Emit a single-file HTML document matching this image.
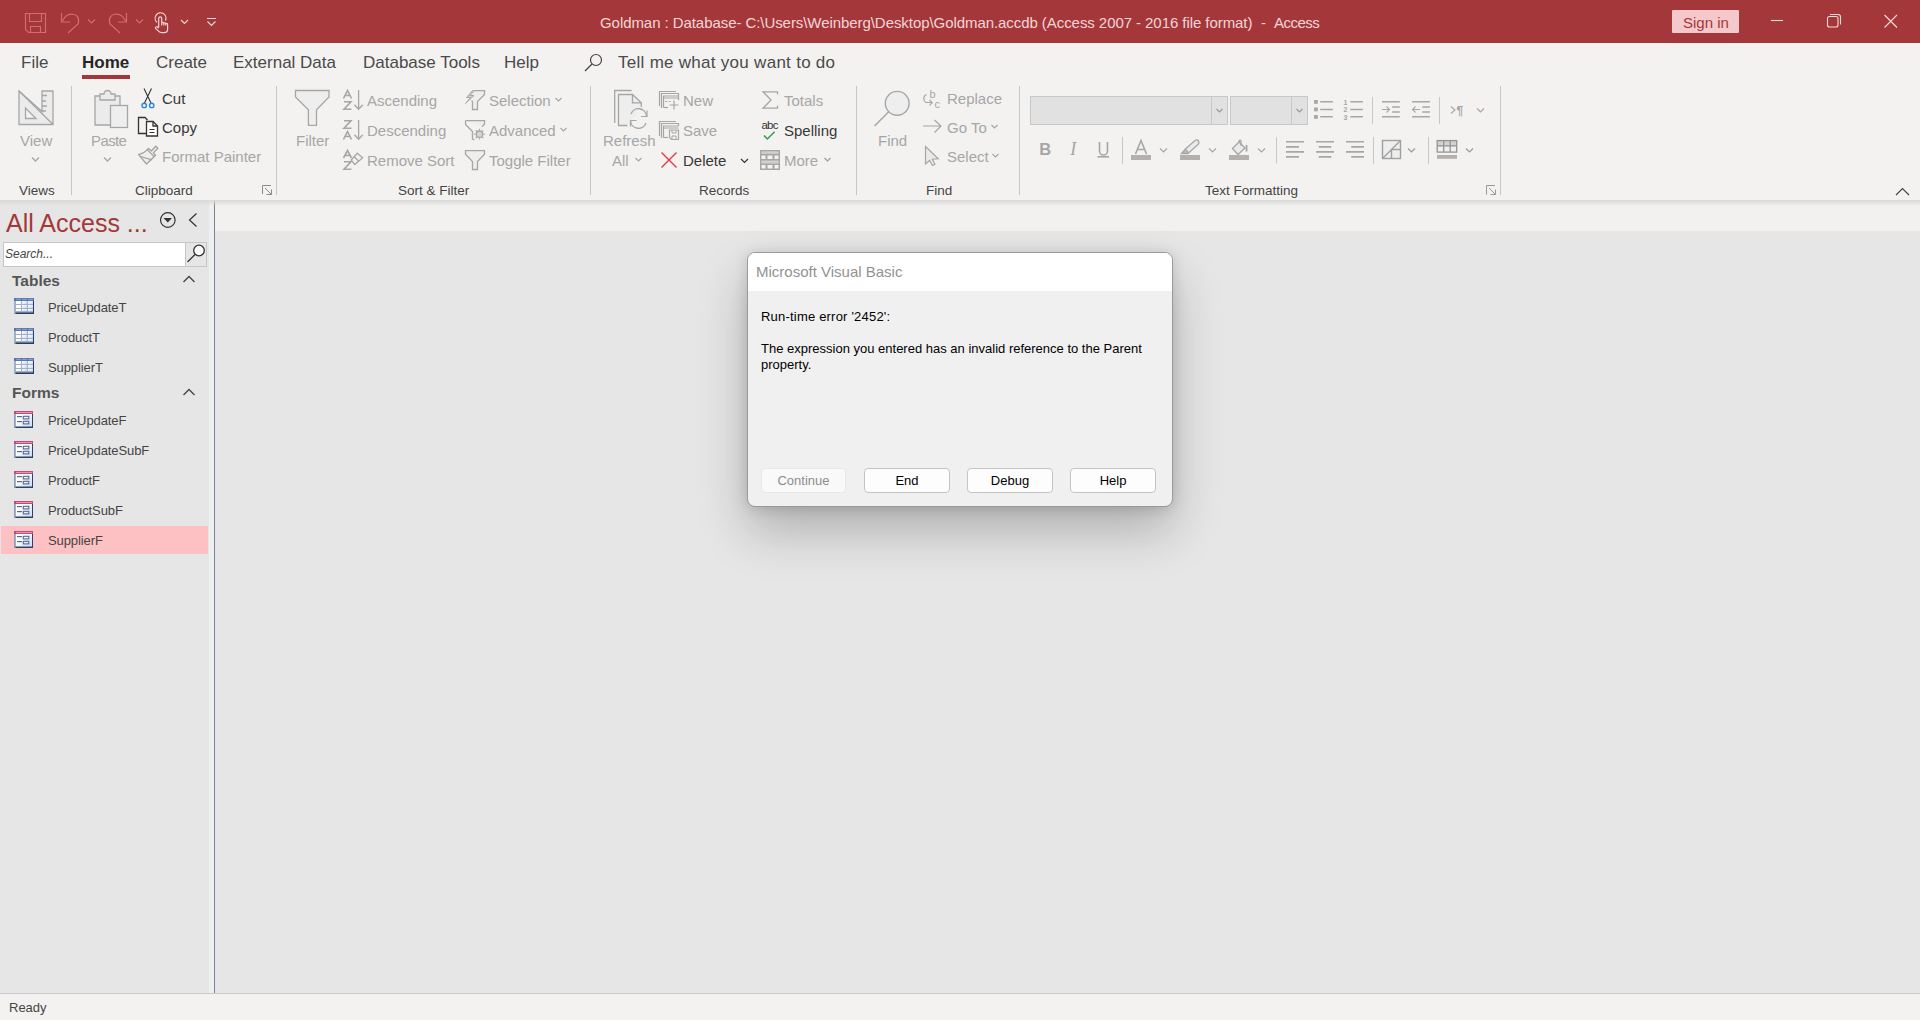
<!DOCTYPE html>
<html><head><meta charset="utf-8">
<style>
*{margin:0;padding:0;box-sizing:border-box}
html,body{width:1920px;height:1020px;overflow:hidden;background:#e6e6e6;font-family:"Liberation Sans",sans-serif;position:relative}
.a{position:absolute}
.t{position:absolute;white-space:nowrap;line-height:1}
#title{left:0;top:0;width:1920px;height:43px;background:#a4373a}
#tabs{left:0;top:43px;width:1920px;height:37px;background:#f3f2f1}
#ribbon{left:0;top:80px;width:1920px;height:120px;background:#f3f2f1}
#shadow{left:0;top:200px;width:1920px;height:6px;background:linear-gradient(#d8d8d8,rgba(230,230,230,0))}
#nav{left:0;top:200px;width:209px;height:793px;background:#e6e6e6}
#navstrip{left:209px;top:200px;width:5px;height:793px;background:#eeeff1}
#navline{left:214px;top:200px;width:1px;height:793px;background:#7a828d}
#docstrip{left:215px;top:200px;width:1705px;height:31px;background:#f2f1f0}
#status{left:0;top:993px;width:1920px;height:27px;background:#f3f2f1;border-top:1px solid #c8c8c8}
.tab{font-size:17px;color:#4a4a4a}
.dis{color:#a6a6a6}
.en{color:#383838}
.rl{font-size:15px}
.gl{font-size:13.5px;color:#444}
.sep{position:absolute;width:1px;background:#c8c6c4}
svg{position:absolute;overflow:visible}
</style></head><body>
<div id="title" class="a"></div>
<div id="tabs" class="a"></div>
<div id="ribbon" class="a"></div>
<div id="nav" class="a"></div>
<div id="navstrip" class="a"></div>
<div id="navline" class="a"></div>
<div id="docstrip" class="a"></div>
<div id="shadow" class="a"></div>
<div id="status" class="a"></div>

<!-- title text -->
<div class="t" style="left:600px;top:15px;font-size:15px;color:#f4d6d7;letter-spacing:-0.065px">Goldman : Database- C:\Users\Weinberg\Desktop\Goldman.accdb (Access 2007 - 2016 file format)</div><div class="t" style="left:1261px;top:15px;font-size:15px;color:#f4d6d7">-</div><div class="t" style="left:1274px;top:15px;font-size:15px;color:#f4d6d7;letter-spacing:-0.5px">Access</div>
<div class="a" style="left:1672px;top:10px;width:67px;height:23px;background:#f5c9cb;border-radius:1px"></div>
<div class="t" style="left:1683px;top:15px;font-size:15px;color:#a4373a">Sign in</div>

<!-- tabs -->
<div class="t tab" style="left:21px;top:54px">File</div>
<div class="t tab" style="left:82px;top:54px;color:#262626;font-weight:bold">Home</div>
<div class="a" style="left:82px;top:75px;width:48px;height:4px;background:#a4373a"></div>
<div class="t tab" style="left:156px;top:54px">Create</div>
<div class="t tab" style="left:233px;top:54px">External Data</div>
<div class="t tab" style="left:363px;top:54px">Database Tools</div>
<div class="t tab" style="left:504px;top:54px">Help</div>
<div class="t tab" style="left:618px;top:54px;letter-spacing:0.28px">Tell me what you want to do</div>

<!-- ribbon separators -->
<div class="sep" style="left:71px;top:86px;height:109px"></div>
<div class="sep" style="left:276px;top:86px;height:109px"></div>
<div class="sep" style="left:590px;top:86px;height:109px"></div>
<div class="sep" style="left:856px;top:86px;height:109px"></div>
<div class="sep" style="left:1019px;top:86px;height:109px"></div>
<div class="sep" style="left:1500px;top:86px;height:109px"></div>

<!-- group labels -->
<div class="t gl" style="left:19px;top:184px">Views</div>
<div class="t gl" style="left:135px;top:184px">Clipboard</div>
<div class="t gl" style="left:398px;top:184px">Sort &amp; Filter</div>
<div class="t gl" style="left:699px;top:184px">Records</div>
<div class="t gl" style="left:926px;top:184px">Find</div>
<div class="t gl" style="left:1205px;top:184px">Text Formatting</div>

<!-- ribbon text -->
<div class="t rl dis" style="left:20px;top:133px">View</div>
<div class="t rl dis" style="left:91px;top:133px;letter-spacing:-0.6px">Paste</div>
<div class="t rl en" style="left:162px;top:91px">Cut</div>
<div class="t rl en" style="left:162px;top:120px">Copy</div>
<div class="t rl dis" style="left:162px;top:149px">Format Painter</div>
<div class="t rl dis" style="left:296px;top:133px">Filter</div>
<div class="t rl dis" style="left:367px;top:93px">Ascending</div>
<div class="t rl dis" style="left:367px;top:123px">Descending</div>
<div class="t rl dis" style="left:367px;top:153px">Remove Sort</div>
<div class="t rl dis" style="left:489px;top:93px">Selection</div>
<div class="t rl dis" style="left:489px;top:123px">Advanced</div>
<div class="t rl dis" style="left:489px;top:153px">Toggle Filter</div>
<div class="t rl dis" style="left:603px;top:133px">Refresh</div>
<div class="t rl dis" style="left:612px;top:153px">All</div>
<div class="t rl dis" style="left:683px;top:93px">New</div>
<div class="t rl dis" style="left:683px;top:123px">Save</div>
<div class="t rl en" style="left:683px;top:153px">Delete</div>
<div class="t rl dis" style="left:784px;top:93px">Totals</div>
<div class="t rl en" style="left:784px;top:123px">Spelling</div>
<div class="t rl dis" style="left:784px;top:153px">More</div>
<div class="t rl dis" style="left:878px;top:133px">Find</div>
<div class="t rl dis" style="left:947px;top:91px">Replace</div>
<div class="t rl dis" style="left:947px;top:120px">Go To</div>
<div class="t rl dis" style="left:947px;top:149px">Select</div>

<!-- combos -->
<div class="a" style="left:1030px;top:96px;width:198px;height:29px;background:#e1e1e1;border:1px solid #c8c8c8"></div>
<div class="a" style="left:1211px;top:97px;width:1px;height:27px;background:#c8c8c8"></div>
<div class="a" style="left:1230px;top:96px;width:78px;height:29px;background:#e1e1e1;border:1px solid #c8c8c8"></div>
<div class="a" style="left:1291px;top:97px;width:1px;height:27px;background:#c8c8c8"></div>

<!-- nav pane -->
<div class="t" style="left:6px;top:211px;font-size:25px;color:#a4373a">All Access ...</div>
<div class="a" style="left:3px;top:242px;width:204px;height:25px;background:#fff;border:1px solid #c6c6c6"></div>
<div class="a" style="left:185px;top:242px;width:22px;height:25px;background:#e6e6e6;border:1px solid #c6c6c6"></div>
<div class="t" style="left:5px;top:248px;font-size:12px;font-style:italic;color:#444">Search...</div>
<div class="t" style="left:12px;top:273px;font-size:15.5px;font-weight:bold;color:#555">Tables</div>
<div class="t" style="left:12px;top:385px;font-size:15.5px;font-weight:bold;color:#555">Forms</div>
<div class="a" style="left:1px;top:526px;width:207px;height:28px;background:#fdc1c4"></div>
<div class="t" style="left:48px;top:301px;font-size:13px;color:#444;letter-spacing:-0.1px">PriceUpdateT</div>
<div class="t" style="left:48px;top:331px;font-size:13px;color:#444;letter-spacing:-0.1px">ProductT</div>
<div class="t" style="left:48px;top:361px;font-size:13px;color:#444;letter-spacing:-0.1px">SupplierT</div>
<div class="t" style="left:48px;top:414px;font-size:13px;color:#444;letter-spacing:-0.1px">PriceUpdateF</div>
<div class="t" style="left:48px;top:444px;font-size:13px;color:#444;letter-spacing:-0.1px">PriceUpdateSubF</div>
<div class="t" style="left:48px;top:474px;font-size:13px;color:#444;letter-spacing:-0.1px">ProductF</div>
<div class="t" style="left:48px;top:504px;font-size:13px;color:#444;letter-spacing:-0.1px">ProductSubF</div>
<div class="t" style="left:48px;top:534px;font-size:13px;color:#444;letter-spacing:-0.1px">SupplierF</div>

<!-- status -->
<div class="t" style="left:9px;top:1001px;font-size:13px;color:#444">Ready</div>

<!-- dialog -->
<div class="a" style="left:747px;top:252px;width:426px;height:255px;border:1px solid #9a9a9a;border-radius:8px;background:#f0f0f0;overflow:hidden;box-shadow:0 24px 50px rgba(0,0,0,0.24), 0 2px 14px rgba(0,0,0,0.14)">
  <div class="a" style="left:0;top:0;width:424px;height:38px;background:#fff"></div>
</div>
<div class="t" style="left:756px;top:264px;font-size:15px;color:#929292">Microsoft Visual Basic</div>
<div class="t" style="left:761px;top:310px;font-size:13px;color:#000;letter-spacing:0.2px">Run-time error '2452':</div>
<div class="t" style="left:761px;top:342px;font-size:13px;color:#000">The expression you entered has an invalid reference to the Parent</div>
<div class="t" style="left:761px;top:358px;font-size:13px;color:#000">property.</div>
<div class="a" style="left:761px;top:468px;width:85px;height:25px;background:#f9f9f9;border:1px solid #e8e8e8;border-radius:4px"></div>
<div class="a" style="left:864px;top:468px;width:86px;height:25px;background:#fdfdfd;border:1px solid #c4c4c4;border-radius:4px"></div>
<div class="a" style="left:967px;top:468px;width:86px;height:25px;background:#fdfdfd;border:1px solid #c4c4c4;border-radius:4px"></div>
<div class="a" style="left:1070px;top:468px;width:86px;height:25px;background:#fdfdfd;border:1px solid #c4c4c4;border-radius:4px"></div>
<div class="t" style="left:761px;top:474px;width:85px;text-align:center;font-size:13px;color:#8d8d8d">Continue</div>
<div class="t" style="left:864px;top:474px;width:86px;text-align:center;font-size:13px;color:#000">End</div>
<div class="t" style="left:967px;top:474px;width:86px;text-align:center;font-size:13px;color:#000">Debug</div>
<div class="t" style="left:1070px;top:474px;width:86px;text-align:center;font-size:13px;color:#000">Help</div>


<svg width="1920" height="1020" style="left:0;top:0" fill="none" stroke-linecap="butt" stroke-linejoin="miter">
<!-- QAT -->
<g stroke="#d56b6f" stroke-width="1.2">
  <path d="M25.5,13.5 H45.5 V32.5 H28.5 L25.5,29.5 Z"/>
  <path d="M29.5,13.5 V21.5 H41.5 V13.5"/>
  <path d="M30.5,32.5 V26.5 H40.5 V32.5"/>
  <path d="M61.5,13 V22 H70"/>
  <path d="M62.5,21 C66,11 82,12 78,24 L68,33"/>
  <path d="M88,19.5 L91.5,23 L95,19.5"/>
  <path d="M126.5,13 V22 H118"/>
  <path d="M125.5,21 C122,11 106,12 110,24 L120,33"/>
  <path d="M136,19.5 L139.5,23 L143,19.5"/>
</g>
<g stroke="#f3d4d5" stroke-width="1.2">
  <path d="M157,22.3 A5.4,5.4 0 1 1 165.4,20.6"/>
  <path d="M158.7,27.2 V18.3 A1.5,1.5 0 0 1 161.7,18.3 V25.6 M161.7,23.2 Q161.9,22.4 162.8,22.4 Q163.8,22.4 163.8,23.4 V25.6 M163.8,23.4 Q164,22.8 164.8,22.8 Q165.8,22.8 165.8,23.8 V25.6 M165.8,24 Q166,23.3 166.7,23.3 Q167.6,23.3 167.6,24.4 V29.6 C167.6,31.6 166.2,32.6 164.3,32.6 H161.8 C160.4,32.6 159.4,32.1 158.5,31.2 L155.6,28.3 C155,27.6 156,26.4 157.2,26.9 L158.7,27.9"/>
  <path d="M181,20 L184.5,23.5 L188,20"/>
  <path d="M207,18.5 H216 M207.5,21.5 L211.5,25.5 L215.5,21.5"/>
</g>
<g stroke="#f6dadb" stroke-width="1.1">
  <path d="M1771,20.5 H1783"/>
  <path d="M1829.5,16.5 H1836 Q1838,16.5 1838,18.5 V25 Q1838,27 1836,27 H1829.5 Q1827.5,27 1827.5,25 V18.5 Q1827.5,16.5 1829.5,16.5 Z"/>
  <path d="M1830,14.5 H1838 Q1840.5,14.5 1840.5,17 V24.5"/>
  <path d="M1884.5,15 L1897,27.5 M1897,15 L1884.5,27.5"/>
</g>
<!-- tell me search -->
<g stroke="#444" stroke-width="1.2">
  <circle cx="596" cy="60" r="5.5"/>
  <path d="M592,64 L585,71"/>
</g>
<!-- View icon -->
<g stroke="#a6a6a6" stroke-width="1.3">
  <path d="M19,91 V124.5 H53 V91 H42 V111.5 Z" fill="#ebebeb"/>
  <path d="M19,91 L53,124.5" />
  <path d="M25.5,108 V118.5 H36 Z" fill="#f3f2f1"/>
  <path d="M42,95.5 H47 M42,101 H46 M42,106 H47 M42,111 H46"/>
  <path d="M32,157.5 L35.5,161 L39,157.5"/>
</g>
<!-- Paste -->
<g stroke="#a6a6a6" stroke-width="1.3">
  <path d="M110,125 H95 V96 H120 V105" fill="#ebebeb"/>
  <path d="M100,100 V94 H104 A3.5,3.5 0 0 1 111,94 H115 V100 Z" fill="#ebebeb"/>
  <rect x="110.5" y="105.5" width="17" height="22" fill="#eeeeee"/>
  <path d="M104,157.5 L107.5,161 L111,157.5"/>
</g>
<!-- Cut -->
<g stroke="#333" stroke-width="1.1">
  <path d="M144,88.5 L151,103 M151.5,88.5 L144.5,103"/>
</g>
<g stroke="#2b88d8" stroke-width="1.4">
  <circle cx="144.2" cy="105.4" r="2.2"/>
  <circle cx="151.7" cy="105.4" r="2.2"/>
</g>
<!-- Copy -->
<g stroke="#333" stroke-width="1.3">
  <path d="M146,133.5 H138.5 V117.5 H145 L147.5,120"/>
  <path d="M146.5,121.5 H153 L157.5,126 V136 H146.5 Z" fill="#fff"/>
  <path d="M153,121.5 V126 H157.5"/>
  <path d="M149.5,129.5 H154.5 M149.5,132.5 H154.5" stroke-width="1"/>
</g>
<!-- Format painter -->
<g stroke="#a2a2a2" stroke-width="1.3" stroke-linejoin="round">
  <path d="M138.6,154.6 C142,153.6 145.3,152 147.2,149.6 L148.5,148.4 L151.3,151 L155.7,146.3 L157.8,148.3 L153.3,152.9 L155.6,155.3 L146.5,164 Z" fill="#eeeeee"/>
  <path d="M147.2,149.6 L154.2,156.6"/>
  <path d="M140.5,156.5 L152,159.8"/>
</g>
<!-- dialog launcher clipboard -->
<g stroke="#8a8a8a" stroke-width="1">
  <path d="M262.5,194 V185.5 H271"/>
  <path d="M265,188 L271.5,194.5 M266.5,194.5 H271.5 V189.5"/>
</g>
<!-- Filter -->
<g stroke="#a6a6a6" stroke-width="1.3">
  <path d="M295.5,90.5 H329 V97 L316.5,109.8 V125.3 H308.4 V109.8 L295.5,97 Z" fill="#eeeeee"/>
</g>
<!-- Sort icons -->
<g stroke="#a6a6a6" stroke-width="1.3">
  <path d="M343.5,98.5 L347.5,90.5 L351.5,98.5 M345,95.5 H350" stroke-width="1.6"/>
  <path d="M344,101.8 H351 L344,109.3 H351.5" stroke-width="1.6"/>
  <path d="M358.6,90 V109.5 M354.4,104.7 L358.6,109.3 L362.8,104.7"/>
  <path d="M344,120.8 H351 L344,128.3 H351.5" stroke-width="1.6"/>
  <path d="M343.5,139.5 L347.5,131.5 L351.5,139.5 M345,136.5 H350" stroke-width="1.6"/>
  <path d="M358.6,120 V139.5 M354.4,134.7 L358.6,139.3 L362.8,134.7"/>
  <path d="M343.5,158 L347.5,150.5 L351.5,158 M345,155.5 H350" stroke-width="1.6"/>
  <path d="M344,161.8 H351 L344,169.3 H351.5" stroke-width="1.6"/>
  <path d="M357.2,153.2 L362.6,157.8 L354.8,164.6 L351.2,160 Z"/>
  <path d="M354,156.5 L358.5,161" />
</g>
<!-- Selection / Advanced / Toggle -->
<g stroke="#a6a6a6" stroke-width="1.3">
  <path d="M473.5,90.7 H484.5 V94.5 L477.5,101.5 V109.5 H472.5 V101.5 L471.5,100.5" fill="#eeeeee"/>
  <path d="M473,90 L466.5,97.5 H470.5 L465.5,103.5 L474,95.5 H470 L474.5,90.5" stroke-width="1" fill="#d0d0d0"/>
  <path d="M465.5,120.7 H484.5 V124.2 L482,126.7 M476,131.2 H477.5 M472.5,139.5 V131.5 L465.5,124.5 V120.7" fill="#eeeeee"/>
  <path d="M472.5,139.5 H474.5"/>
  <circle cx="479.5" cy="134.2" r="3.2" fill="#d6d6d6"/>
  <path d="M479.5,128.8 V130.2 M479.5,138.2 V139.6 M474.1,134.2 H475.5 M483.5,134.2 H484.9 M475.7,130.4 L476.7,131.4 M482.3,137 L483.3,138 M475.7,138 L476.7,137 M482.3,131.4 L483.3,130.4" stroke-width="1.2"/>
  <path d="M465.5,150.7 H484.5 V154.2 L477.5,161.5 V169.5 H472.5 V161.5 L465.5,154.2 Z" fill="#eeeeee"/>
  <path d="M555.5,98 L558.5,101 L561.5,98 M560.5,128 L563.5,131 L566.5,128" stroke-width="1.2"/>
</g>
<!-- Refresh -->
<g stroke="#a6a6a6" stroke-width="1.3">
  <path d="M614.7,123 V90.5 H631.6"/>
  <path d="M627.3,125.5 H618.5 V94.5 H632.5 L641.3,102.8 V107" fill="#eeeeee"/>
  <path d="M632.5,94.5 V102.8 H641.3"/>
  <path d="M631,114 A8,8 0 0 1 646.5,116 M646,123 A8,8 0 0 1 630.5,121"/>
  <path d="M647,110.5 V116.5 H641 M630.5,126.5 V120.5 H636.5" stroke-width="1.2"/>
  <path d="M635.5,158 L638.5,161 L641.5,158" stroke-width="1.2"/>
</g>
<!-- New / Save -->
<g stroke="#a6a6a6" stroke-width="1.2">
  <path d="M659.5,106 V91.5 H676"/>
  <path d="M661.5,108 V93.5 H678.5 V100"/>
  <path d="M663.5,107.5 V96 H678.5 M663.5,98 H678.5"/>
  <path d="M663.5,107.5 H668"/>
  <path d="M665,101.5 H667 M668.5,101.5 H670.5" />
  <path d="M674,100.5 V109.5 M669.5,105 H678.5"/>
  <path d="M659.5,136 V121.5 H676"/>
  <path d="M661.5,138 V123.5 H678.5 V126"/>
  <path d="M663.5,137.5 V126 H678.5 M663.5,128 H678.5"/>
  <path d="M663.5,137.5 H668"/>
  <path d="M669.5,130 H678.5 V139.5 H671.5 L669.5,137.5 Z"/>
  <path d="M672,130 V133 H676 V130 M672,139.5 V136 H676 V139.5" stroke-width="1"/>
</g>
<!-- Delete X -->
<g stroke="#e8383d" stroke-width="1.4">
  <path d="M661.5,152.5 L676.5,167.5 M676.5,152.5 L661.5,167.5"/>
</g>
<path d="M741,159 L744.5,162.5 L748,159" stroke="#333" stroke-width="1.2"/>
<!-- Totals -->
<g stroke="#a6a6a6" stroke-width="1.3">
  <path d="M777.5,94.5 V91.8 H763 L771,100 L763,108.2 H777.5 V105.5"/>
</g>
<!-- Spelling -->
<text x="761.5" y="128.5" font-family="Liberation Sans" font-size="11.5" fill="#333" stroke="none" letter-spacing="-0.8">abc</text>
<path d="M764,135.6 L767.3,139 L774.6,131.7" stroke="#2ea043" stroke-width="1.5"/>
<!-- More grid -->
<g stroke="none" fill="#a6a6a6">
  <path d="M760,150 H780 V170 H760 Z M761.5,155.5 V159 H765.5 V155.5 Z M767.5,155.5 V159 H772.5 V155.5 Z M774.5,155.5 V159 H778.5 V155.5 Z M761.5,165 V168.5 H765.5 V165 Z M767.5,165 V168.5 H772.5 V165 Z M774.5,165 V168.5 H778.5 V165 Z" fill-rule="evenodd"/>
  <rect x="761.3" y="151.3" width="17.4" height="2.5" fill="#d0d0d0"/>
  <rect x="761.3" y="160.5" width="17.4" height="3" fill="#d0d0d0"/>
</g>
<path d="M824.5,158 L827.5,161 L830.5,158" stroke="#9c9c9c" stroke-width="1.2"/>
<!-- Find -->
<g stroke="#a6a6a6" stroke-width="1.4">
  <circle cx="897.2" cy="103.3" r="11.9" fill="#eeeeee"/>
  <path d="M888.5,112 L874.5,126"/>
</g>
<!-- Replace / GoTo / Select -->
<text x="929.5" y="97.5" font-family="Liberation Sans" font-size="11" fill="#a6a6a6" stroke="none">b</text>
<text x="934.5" y="107.8" font-family="Liberation Sans" font-size="11" fill="#a6a6a6" stroke="none">c</text>
<g stroke="#a6a6a6" stroke-width="1.2">
  <path d="M926.5,94.5 C923,96 923,101 926,102.5 H931.5 M929.5,100 L932.2,102.7 L929.5,105.4"/>
  <path d="M923,126 H941 M934.5,120 L941,126 L934.5,132.5"/>
  <path d="M925.5,146.5 V164 L929.5,160.5 L932.5,165.5 L935,164.3 L932.3,159.2 L938.2,158.8 Z" fill="#eaeaea"/>
  <path d="M991.5,125 L994.5,128 L997.5,125 M992.5,154 L995.5,157 L998.5,154" stroke-width="1.2"/>
</g>
<!-- Combo chevrons -->
<path d="M1216.5,109 L1219.5,112 L1222.5,109 M1296.5,109 L1299.5,112 L1302.5,109" stroke="#999" stroke-width="1.2"/>
<!-- B I U -->
<text x="1039.3" y="155" font-family="Liberation Sans" font-size="16.5" font-weight="bold" fill="#a6a6a6" stroke="none">B</text>
<text x="1070.3" y="155" font-family="Liberation Serif" font-size="18" font-style="italic" fill="#a6a6a6" stroke="none">I</text>
<g stroke="#a6a6a6" stroke-width="1.3">
  <path d="M1099.5,142 V151 A4,4 0 0 0 1107.5,151 V142" stroke-width="1.6"/>
  <path d="M1097.5,156.8 H1109" stroke-width="1.6"/>
</g>
<path d="M1122.5,137 V164 M1276.5,137.3 V163.5 M1372.5,97 V124 M1439.5,97 V124 M1373.5,137 V164 M1428.5,137 V164" stroke="#c8c6c4" stroke-width="1"/>
<!-- Font color -->
<g stroke="#a6a6a6" stroke-width="1.4">
  <path d="M1135.5,154 L1141,140.5 L1146.5,154 M1137.3,149.5 H1144.7" stroke-width="1.6"/>
</g>
<rect x="1131" y="155" width="20" height="5" fill="#b4b0ae"/>
<rect x="1180" y="155" width="20" height="5" fill="#b4b0ae"/>
<rect x="1229" y="155" width="20" height="5" fill="#b4b0ae"/>
<g stroke="#a6a6a6" stroke-width="1.2">
  <path d="M1160,148.5 L1163.5,152 L1167,148.5 M1209,148.5 L1212.5,152 L1216,148.5 M1258,148.5 L1261.5,152 L1265,148.5"/>
</g>
<!-- Highlighter -->
<g stroke="#a6a6a6" stroke-width="1.3">
  <path d="M1185.5,149 L1195,140.5 Q1197.5,139 1198.8,141.5 Q1199.5,143 1198,144.5 L1188.5,153 Z" fill="#ebebeb"/>
  <path d="M1185.5,149 L1181.5,153.5 H1188.5" fill="#b8b8b8"/>
</g>
<!-- Fill bucket -->
<g stroke="#a6a6a6" stroke-width="1.3">
  <path d="M1232.5,148.5 L1239,142 L1245,148 L1238,154.5 Z" fill="#ebebeb"/>
  <path d="M1239,142 V141 Q1240,139.5 1241,141 V146"/>
  <path d="M1246.5,145 V151.5" stroke-width="1.8"/>
</g>
<!-- Align -->
<g stroke="#a6a6a6" stroke-width="1.6">
  <path d="M1286,141.8 H1304 M1286,146.9 H1299 M1286,151.9 H1304 M1286,156.9 H1299"/>
  <path d="M1316,141.8 H1334 M1318.7,146.9 H1331.3 M1316,151.9 H1334 M1318.7,156.9 H1331.3"/>
  <path d="M1346,141.8 H1364 M1351.2,146.9 H1364 M1346,151.9 H1364 M1351.2,156.9 H1364"/>
</g>
<!-- Bullets / numbering -->
<g fill="#a6a6a6" stroke="none">
  <rect x="1314" y="100" width="3.8" height="3.8"/>
  <rect x="1314" y="107.5" width="3.8" height="3.8"/>
  <rect x="1314" y="115" width="3.8" height="3.8"/>
</g>
<g stroke="#a6a6a6" stroke-width="1.5">
  <path d="M1320.2,101.8 H1332.8 M1320.2,109.4 H1332.8 M1320.2,116.8 H1332.8"/>
  <path d="M1350.3,101.8 H1362.9 M1350.3,109.4 H1362.9 M1350.3,116.8 H1362.9"/>
</g>
<text x="1343.5" y="104.5" font-family="Liberation Sans" font-size="7" font-weight="bold" fill="#a6a6a6" stroke="none">1</text>
<text x="1343.5" y="112" font-family="Liberation Sans" font-size="7" font-weight="bold" fill="#a6a6a6" stroke="none">2</text>
<text x="1343.5" y="119.5" font-family="Liberation Sans" font-size="7" font-weight="bold" fill="#a6a6a6" stroke="none">3</text>
<!-- Indent -->
<g stroke="#a6a6a6" stroke-width="1.5">
  <path d="M1382,101.8 H1399.8 M1392.1,106.9 H1399.8 M1392.1,111.9 H1399.8 M1382,116.8 H1399.8"/>
  <path d="M1412.1,101.8 H1429.9 M1422.3,106.9 H1429.9 M1422.3,111.9 H1429.9 M1412.1,116.8 H1429.9"/>
</g>
<g stroke="#a6a6a6" stroke-width="1.1">
  <path d="M1382,109.5 H1389.5 M1386.5,106.5 L1389.5,109.5 L1386.5,112.5"/>
  <path d="M1420,109.5 H1412.5 M1415.5,106.5 L1412.5,109.5 L1415.5,112.5"/>
  <path d="M1451,106.5 L1455,110 L1451,113.5"/>
  <path d="M1477,108.5 L1480.5,112 L1484,108.5" stroke-width="1.2"/>
</g>
<text x="1456.5" y="115" font-family="Liberation Sans" font-size="12" font-weight="bold" fill="#a6a6a6" stroke="none">¶</text>
<!-- gridlines -->
<g stroke="#a0a0a0" stroke-width="1.4">
  <rect x="1382.5" y="140.5" width="18" height="18" fill="#eeeeee"/>
  <path d="M1382.5,158.5 L1400.5,140.5 M1391.5,158.5 V149.5 H1400.5"/>
  <path d="M1408,148.5 L1411.5,152 L1415,148.5" stroke-width="1.2" stroke="#9a9a9a"/>
</g>
<rect x="1437.5" y="140.8" width="19" height="5.5" fill="#d2d2d2"/>
<rect x="1437.5" y="146.3" width="19" height="5.5" fill="#f0f0f0"/>
<g stroke="#949494" stroke-width="1.3">
  <rect x="1437.2" y="140.6" width="19.5" height="11.5" fill="none"/>
  <path d="M1443.7,140.6 V152 M1450.2,140.6 V152 M1437.2,145.8 H1456.7"/>
</g>
<rect x="1437" y="155" width="20" height="3.8" fill="#b4b0ae"/>
<path d="M1466,148.5 L1469.5,152 L1473,148.5" stroke="#9a9a9a" stroke-width="1.2"/>
<g stroke="#9a9a9a" stroke-width="1">
  <path d="M1486.5,194.5 V185.5 H1495"/>
  <path d="M1489,188 L1495.5,194.5 M1490.5,194.5 H1495.5 V189.5"/>
  <path d="M1896,195 L1902.5,188.5 L1909,195" stroke="#444" stroke-width="1.2"/>
</g>
<!-- nav pane -->
<g stroke="#333" stroke-width="1.2">
  <circle cx="167.8" cy="220" r="7.3"/>
  <path d="M196.5,213.5 L189.5,220 L196.5,226.5"/>
</g>
<path d="M163.5,218 H172 L167.8,222.5 Z" fill="#333"/>
<g stroke="#333" stroke-width="1.3">
  <circle cx="199" cy="250.5" r="5.3" fill="#fafafa"/>
  <path d="M195,254.5 L187.5,262"/>
</g>
<path d="M183.5,282 L189,276.5 L194.5,282 M183.5,395 L189,389.5 L194.5,395" stroke="#444" stroke-width="1.3"/>
</svg>


<svg width="1920" height="1020" style="left:0;top:0">
<defs>
 <linearGradient id="cellg" x1="0" y1="0" x2="1" y2="1"><stop offset="0" stop-color="#ffffff"/><stop offset="1" stop-color="#c9dafa"/></linearGradient>
 <g id="tbl">
  <rect x="0" y="0" width="20" height="16" fill="#a3b1c8"/>
  <rect x="0" y="0" width="20" height="3" fill="#5a76b0"/>
  <rect x="2.2" y="0.8" width="4.6" height="1.2" fill="#8aa0cc"/>
  <rect x="8.2" y="0.8" width="4.6" height="1.2" fill="#8aa0cc"/>
  <rect x="14.2" y="0.8" width="4.6" height="1.2" fill="#8aa0cc"/>
  <rect x="0" y="3" width="1.6" height="13" fill="#9fb0cb"/>
  <rect x="2" y="3" width="4.9" height="3" fill="#fff"/>
  <rect x="8" y="3" width="4.9" height="3" fill="url(#cellg)"/>
  <rect x="14" y="3" width="4.9" height="3" fill="url(#cellg)"/>
  <rect x="2" y="7" width="4.9" height="3" fill="#fff"/>
  <rect x="8" y="7" width="4.9" height="3" fill="url(#cellg)"/>
  <rect x="14" y="7" width="4.9" height="3" fill="url(#cellg)"/>
  <rect x="2" y="11" width="4.9" height="2" fill="#fff"/>
  <rect x="8" y="11" width="4.9" height="2" fill="url(#cellg)"/>
  <rect x="14" y="11" width="4.9" height="2" fill="url(#cellg)"/>
  <rect x="1.5" y="14.5" width="18.5" height="1.5" fill="#2b3c5c"/>
  <rect x="19" y="3" width="1" height="13" fill="#2b3c5c"/>
 </g>
 <linearGradient id="formg" x1="0" y1="0" x2="1" y2="1"><stop offset="0.4" stop-color="#ffffff"/><stop offset="1" stop-color="#c4d6f8"/></linearGradient>
 <g id="frm">
  <rect x="0" y="0" width="19" height="17" fill="url(#formg)"/>
  <rect x="0" y="0" width="19" height="3" fill="#c54a7a"/>
  <rect x="2" y="1" width="16" height="1" fill="#dc9bb3"/>
  <rect x="0" y="3" width="1.8" height="14" fill="#8e9ebb"/>
  <rect x="18" y="3" width="1" height="14" fill="#2e4266"/>
  <rect x="1.5" y="15.5" width="17.5" height="1.5" fill="#2e4266"/>
  <rect x="3" y="5" width="5" height="1.2" fill="#586a90"/>
  <rect x="3" y="10" width="5" height="1.2" fill="#586a90"/>
  <rect x="9.3" y="5.3" width="5.5" height="2.6" fill="none" stroke="#56678c" stroke-width="1.1"/>
  <rect x="9.3" y="10.3" width="5.5" height="2.6" fill="none" stroke="#56678c" stroke-width="1.1"/>
 </g>
</defs>
<use href="#tbl" x="14" y="298"/>
<use href="#tbl" x="14" y="328"/>
<use href="#tbl" x="14" y="358"/>
<use href="#frm" x="14" y="411"/>
<use href="#frm" x="14" y="441"/>
<use href="#frm" x="14" y="471"/>
<use href="#frm" x="14" y="501"/>
<use href="#frm" x="14" y="531"/>
</svg>

</body></html>
